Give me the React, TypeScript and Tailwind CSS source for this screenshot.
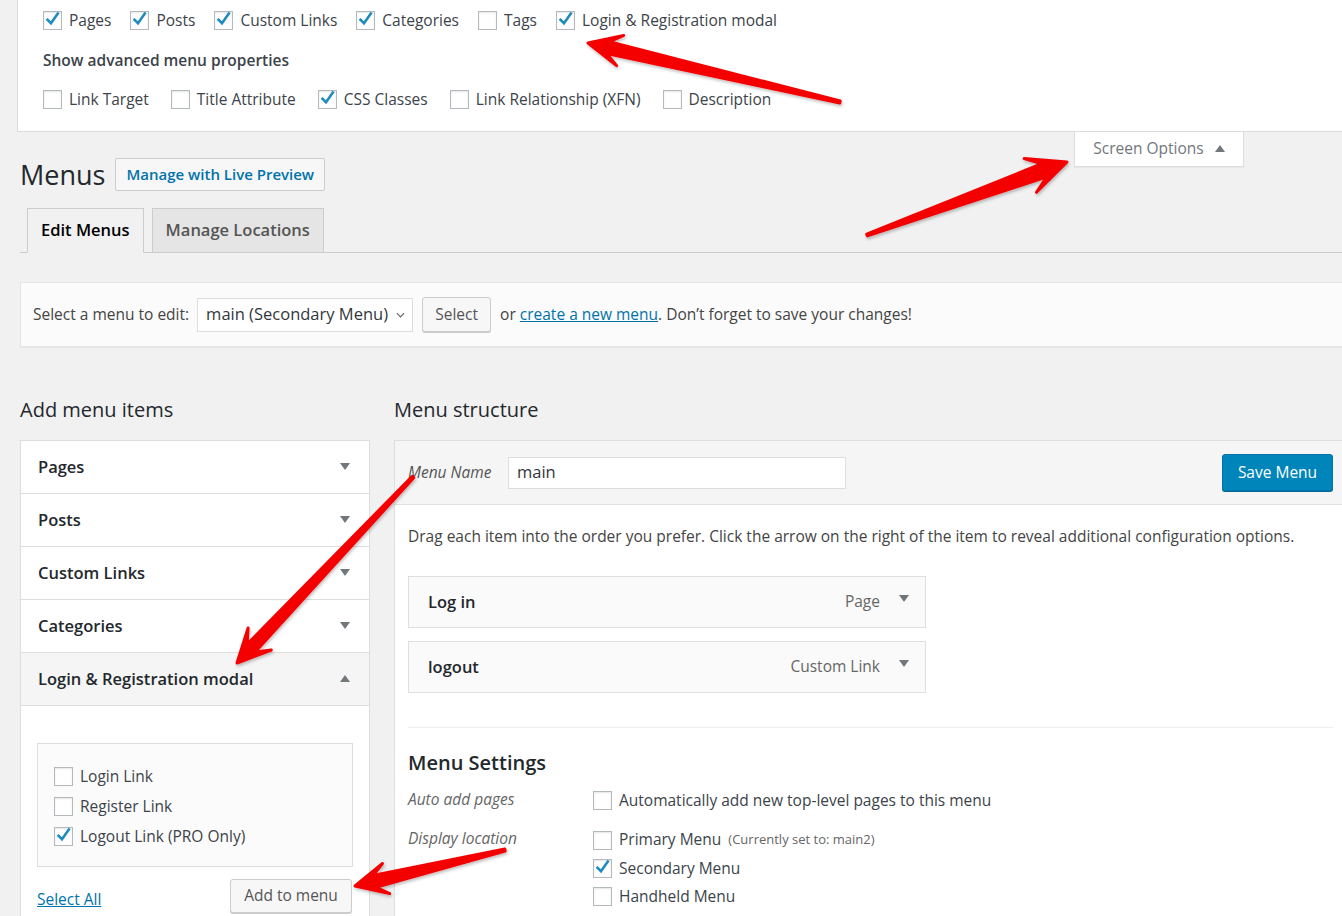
import React from 'react';

const Box = ({ on = false }: { on?: boolean }) => (
  <span className="relative inline-flex h-[19px] w-[19px] shrink-0 border border-[#b4b9be] bg-white shadow-[inset_0_1px_2px_rgba(0,0,0,0.1)]">
    {on && (
      <svg viewBox="0 0 19 19" className="absolute left-[-1px] top-[-2px] h-[19px] w-[19px]">
        <path d="M4.5 9.8 L8 13.2 L14.8 3.6" stroke="#1e8cbe" strokeWidth="2.6" fill="none" strokeLinecap="square" />
      </svg>
    )}
  </span>
);

const Opt = ({ label, on = false }: { label: string; on?: boolean }) => (
  <label className="flex h-[20px] items-center gap-[7px] text-[15.5px] leading-[20px] text-[#3c434a]">
    <Box on={on} />
    <span>{label}</span>
  </label>
);

const Tri = ({ up = false }: { up?: boolean }) => (
  <svg viewBox="0 0 10 8" className="h-[8px] w-[10px]">
    <path d={up ? 'M0 7 L5 0 L10 7 Z' : 'M0 0 L10 0 L5 7 Z'} fill="#72777c" />
  </svg>
);

// arrow drawn from tail (x1,y1) to tip (x2,y2)
function arrow(x1: number, y1: number, x2: number, y2: number, tw: number, nw: number, hl: number, hw: number) {
  const dx = x2 - x1;
  const dy = y2 - y1;
  const len = Math.hypot(dx, dy);
  const ux = dx / len;
  const uy = dy / len;
  const p = (a: number, c: number) => `${(x1 + ux * a - uy * c).toFixed(1)},${(y1 + uy * a + ux * c).toFixed(1)}`;
  const neck = len - hl * 0.62;
  const back = len - hl;
  return [p(0, -tw / 2), p(neck, -nw / 2), p(back, -hw / 2), p(len, 0), p(back, hw / 2), p(neck, nw / 2), p(0, tw / 2)].join(' ');
}

const arrows = [
  arrow(840, 102, 588, 43, 2, 12, 33, 31),
  arrow(867, 235, 1067, 162, 2, 14, 39, 36),
  arrow(413, 477, 237, 663, 2, 11, 33, 32),
  arrow(505, 850, 355, 886, 2, 12, 32, 31),
];

const sections = ['Pages', 'Posts', 'Custom Links', 'Categories'];

export default function App() {
  return (
    <div className="relative h-[916px] w-[1342px] overflow-hidden bg-[#f1f1f1] font-['Open_Sans','Noto_Sans',sans-serif] text-[#444]">
      {/* screen options panel */}
      <div className="ml-[17px] border-b border-l border-[#dcdcdc] bg-white pb-[22px] pl-[25px] pt-[10px]">
        <div className="flex h-[20px] items-center gap-[19px]">
          <Opt label="Pages" on />
          <Opt label="Posts" on />
          <Opt label="Custom Links" on />
          <Opt label="Categories" on />
          <Opt label="Tags" />
          <Opt label="Login & Registration modal" on />
        </div>
        <div className="mt-[20px] h-[20px] text-[15.5px] font-semibold leading-[20px] text-[#3c434a]">Show advanced menu properties</div>
        <div className="mt-[19px] flex h-[20px] items-center gap-[22px]">
          <Opt label="Link Target" />
          <Opt label="Title Attribute" />
          <Opt label="CSS Classes" on />
          <Opt label="Link Relationship (XFN)" />
          <Opt label="Description" />
        </div>
      </div>

      <div className="pl-[20px]">
        <div className="float-right mr-[98px] flex h-[35px] w-[170px] items-center justify-center gap-[11px] border border-t-0 border-[#ddd] bg-white text-[15.5px] text-[#72777c] shadow-[0_1px_1px_rgba(0,0,0,0.04)]">
          <span>Screen Options</span>
          <Tri up />
        </div>
        <div className="flex items-center gap-[10px] pt-[26px]">
          <h1 className="text-[27px] font-normal leading-[33px] text-[#23282d]">Menus</h1>
          <span className="flex h-[33px] items-center rounded-[2px] border border-[#ccc] bg-[#f7f7f7] px-[10px] text-[15px] font-semibold text-[#0073aa]">
            Manage with Live Preview
          </span>
        </div>

        {/* tabs */}
        <div className="mt-[17px] flex gap-[8px] border-b border-[#ccc] pl-[7px]">
          <div className="-mb-px flex h-[45px] items-center border border-[#ccc] border-b-[#f1f1f1] bg-[#f1f1f1] px-[13px] text-[16.5px] font-semibold text-[#000]">
            Edit Menus
          </div>
          <div className="flex h-[44px] items-center border border-b-0 border-[#ccc] bg-[#e5e5e5] px-[13px] text-[16.5px] font-semibold text-[#555]">
            Manage Locations
          </div>
        </div>

        {/* select menu */}
        <div className="mt-[29px] flex h-[65px] items-center border border-r-0 border-[#e5e5e5] bg-[#fbfbfb] pl-[12px] text-[15.5px] shadow-[0_1px_1px_rgba(0,0,0,0.04)]">
          <span>Select a menu to edit:</span>
          <span className="ml-[8px] flex h-[34px] w-[216px] items-center justify-between border border-[#ddd] bg-white pl-[8px] pr-[7px] text-[16.5px] text-[#32373c]">
            main (Secondary Menu)
            <svg viewBox="0 0 10 6" className="h-[6px] w-[9px]">
              <path d="M1 1 L5 5 L9 1" stroke="#666" strokeWidth="1.3" fill="none" />
            </svg>
          </span>
          <span className="ml-[9px] flex h-[35px] w-[69px] items-center justify-center rounded-[3px] border border-[#ccc] bg-[#f7f7f7] text-[#555] shadow-[0_1px_0_#ccc]">
            Select
          </span>
          <span className="ml-[9px]">
            or <span className="text-[#0073aa] underline">create a new menu</span>. Don’t forget to save your changes!
          </span>
        </div>

        {/* columns */}
        <div className="mt-[50px] flex gap-[24px]">
          <div className="w-[350px] shrink-0">
            <h2 className="mb-[17px] h-[26px] text-[20px] font-medium leading-[26px] text-[#23282d]">Add menu items</h2>
            <div className="border-x border-[#ddd] bg-white">
              {sections.map((s) => (
                <div key={s} className="flex h-[53px] items-center justify-between border-t border-[#ddd] pl-[17px] pr-[19px] text-[16.5px] font-semibold text-[#23282d]">
                  {s}
                  <Tri />
                </div>
              ))}
              <div className="flex h-[54px] items-center justify-between border-y border-[#ddd] bg-[#f5f5f5] pl-[17px] pr-[19px] text-[16.5px] font-semibold text-[#23282d]">
                Login &amp; Registration modal
                <Tri up />
              </div>
              <div className="px-[16px] pb-[40px] pt-[37px]">
                <div className="w-[316px] border border-[#ddd] bg-[#fbfbfb] pb-[20px] pl-[16px] pt-[22px]">
                  <div className="flex flex-col gap-[10px]">
                    <Opt label="Login Link" />
                    <Opt label="Register Link" />
                    <Opt label="Logout Link (PRO Only)" on />
                  </div>
                </div>
                <div className="mt-[12px] flex items-center justify-between pr-[1px]">
                  <span className="mt-[8px] text-[15.5px] text-[#0073aa] underline">Select All</span>
                  <span className="flex h-[34px] w-[122px] items-center justify-center rounded-[3px] border border-[#ccc] bg-[#f7f7f7] text-[15.5px] text-[#555] shadow-[0_1px_0_#ccc]">
                    Add to menu
                  </span>
                </div>
              </div>
            </div>
          </div>

          <div className="w-[953px] shrink-0">
            <h2 className="mb-[17px] h-[26px] text-[20px] font-medium leading-[26px] text-[#23282d]">Menu structure</h2>
            <div className="border border-[#dfdfdf] bg-white">
              <div className="flex h-[64px] items-center justify-between border-b border-[#dfdfdf] bg-[#f5f5f5] px-[13px]">
                <div className="flex items-center">
                  <span className="w-[100px] text-[15.5px] italic text-[#555]">Menu Name</span>
                  <span className="flex h-[32px] w-[338px] items-center border border-[#ddd] bg-white pl-[8px] text-[16.5px] text-[#32373c]">main</span>
                </div>
                <span className="flex h-[37px] w-[111px] items-center justify-center rounded-[3px] border border-[#0073aa] bg-[#0085ba] text-[15.5px] text-white shadow-[0_1px_0_#006799]">
                  Save Menu
                </span>
              </div>
              <div className="px-[13px] pb-[40px] pt-[21px]">
                <p className="h-[20px] text-[15.5px] leading-[20px]">
                  Drag each item into the order you prefer. Click the arrow on the right of the item to reveal additional configuration options.
                </p>
                <div className="mt-[30px] flex flex-col gap-[13px]">
                  {[
                    ['Log in', 'Page'],
                    ['logout', 'Custom Link'],
                  ].map(([t, k]) => (
                    <div key={t} className="flex h-[52px] w-[518px] items-center justify-between border border-[#dfdfdf] bg-[#fafafa] pl-[19px] pr-[16px]">
                      <span className="text-[16.5px] font-semibold text-[#23282d]">{t}</span>
                      <span className="flex items-center gap-[19px] text-[15.5px] text-[#666]">
                        {k}
                        <span className="-mt-[6px]"><Tri /></span>
                      </span>
                    </div>
                  ))}
                </div>
                <div className="mt-[34px] border-t border-[#eee]" />
                <h3 className="mt-[22px] h-[26px] text-[20px] font-semibold leading-[26px] text-[#23282d]">Menu Settings</h3>
                <div className="mt-[14px] flex h-[20px] items-center">
                  <span className="w-[185px] text-[15.5px] italic text-[#666]">Auto add pages</span>
                  <Opt label="Automatically add new top-level pages to this menu" />
                </div>
                <div className="mt-[18px] flex items-start">
                  <span className="w-[185px] text-[15.5px] italic leading-[20px] text-[#666]">Display location</span>
                  <div className="flex flex-col gap-[8px] pt-[2px]">
                    <label className="flex h-[20px] items-center gap-[7px] text-[15.5px] text-[#3c434a]">
                      <Box />
                      <span>Primary Menu</span>
                      <span className="text-[13px] text-[#666]">(Currently set to: main2)</span>
                    </label>
                    <Opt label="Secondary Menu" on />
                    <Opt label="Handheld Menu" />
                  </div>
                </div>
              </div>
            </div>
          </div>
        </div>
      </div>

      <svg className="pointer-events-none absolute inset-0 h-[916px] w-[1342px]" viewBox="0 0 1342 916">
        <defs>
          <filter id="sh" x="-10%" y="-10%" width="120%" height="120%">
            <feDropShadow dx="1" dy="2" stdDeviation="1.5" floodColor="#000" floodOpacity="0.25" />
          </filter>
        </defs>
        {arrows.map((pts, i) => (
          <polygon key={i} points={pts} fill="#f40000" stroke="#f40000" strokeWidth="3" strokeLinejoin="round" filter="url(#sh)" />
        ))}
      </svg>
    </div>
  );
}
